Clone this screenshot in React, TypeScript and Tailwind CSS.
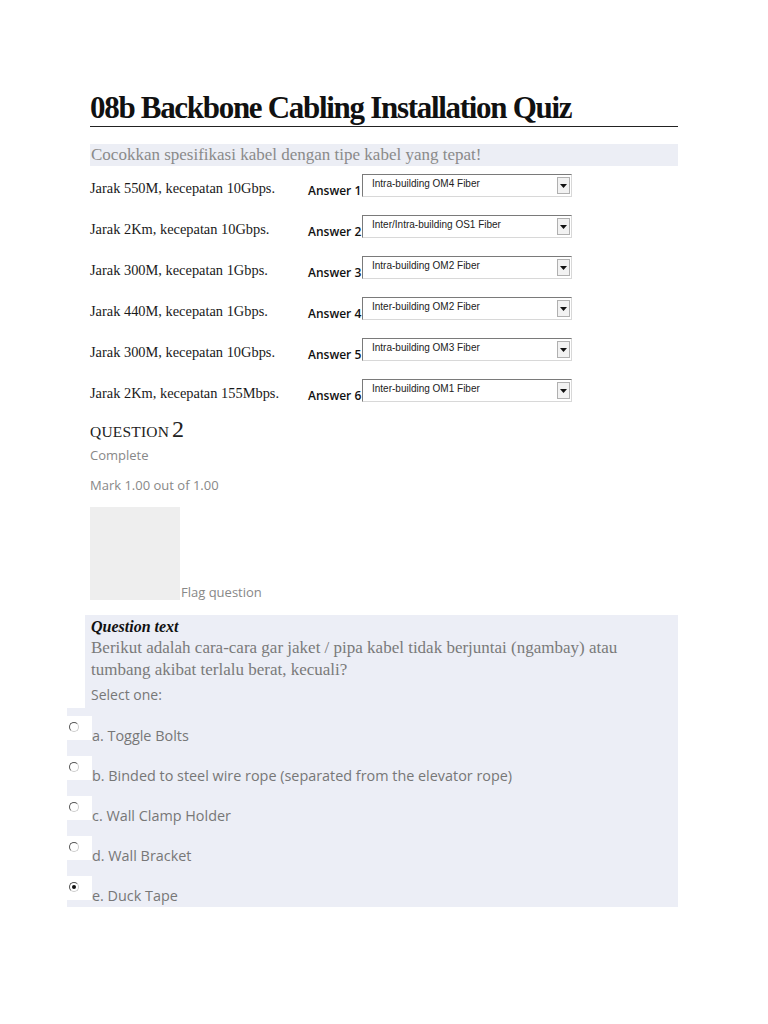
import React from "react";

const rows = [
  ["Jarak 550M, kecepatan 10Gbps.", "Answer 1", "Intra-building OM4 Fiber"],
  ["Jarak 2Km, kecepatan 10Gbps.", "Answer 2", "Inter/Intra-building OS1 Fiber"],
  ["Jarak 300M, kecepatan 1Gbps.", "Answer 3", "Intra-building OM2 Fiber"],
  ["Jarak 440M, kecepatan 1Gbps.", "Answer 4", "Inter-building OM2 Fiber"],
  ["Jarak 300M, kecepatan 10Gbps.", "Answer 5", "Intra-building OM3 Fiber"],
  ["Jarak 2Km, kecepatan 155Mbps.", "Answer 6", "Inter-building OM1 Fiber"],
];

const options = [
  "a. Toggle Bolts",
  "b. Binded to steel wire rope (separated from the elevator rope)",
  "c. Wall Clamp Holder",
  "d. Wall Bracket",
  "e. Duck Tape",
];

const serif = { fontFamily: '"Liberation Serif", "Times New Roman", serif' };
const sans = { fontFamily: '"Open Sans", "Noto Sans", sans-serif' };

function Select({ value }: { value: string }) {
  return (
    <div className="flex h-[23px] w-[210px] border border-t-[#7a7a7a] border-l-[#7a7a7a] border-r-[#d8d8d8] border-b-[#d8d8d8] bg-white">
      <div
        className="flex-1 pl-[9px] pt-[3px] text-[10px] leading-[12px] text-[#222]"
        style={{ fontFamily: '"Liberation Sans", Arial, sans-serif' }}
      >
        {value}
      </div>
      <div className="my-[2px] mr-[1px] flex w-[13px] items-center justify-center border border-[#b0b0b0] bg-[#f2f2f2]">
        <svg width="7" height="4" viewBox="0 0 7 4">
          <path d="M0 0 H7 L3.5 4 Z" fill="#111" />
        </svg>
      </div>
    </div>
  );
}

function Radio({ checked }: { checked?: boolean }) {
  return (
    <div className="flex h-[24px] w-[25px] items-start justify-start bg-white pl-[2px] pt-[6px]">
      <span className="flex h-[10px] w-[10px] items-center justify-center rounded-full border border-t-[#555] border-l-[#555] border-r-[#ccc] border-b-[#ccc] bg-white">
        {checked && <span className="h-[4px] w-[4px] rounded-full bg-[#111]" />}
      </span>
    </div>
  );
}

export default function App() {
  return (
    <div className="min-h-[1024px] w-[768px] bg-white">
      <div className="ml-[90px] w-[588px] pt-[92px]">
        <h1
          className="border-b border-[#222] pb-[2px] text-[31px] font-bold leading-[32px] tracking-[-1.3px] text-[#111]"
          style={serif}
        >
          08b Backbone Cabling Installation Quiz
        </h1>
        <div
          className="mt-[17px] h-[22px] bg-[#eceef5] pl-[1px] text-[17px] leading-[22px] text-[#8a8a8a]"
          style={serif}
        >
          Cocokkan spesifikasi kabel dengan tipe kabel yang tepat!
        </div>
        <div className="mt-[8px]">
          {rows.map(([q, a, v]) => (
            <div key={a} className="flex h-[41px] items-start">
              <div
                className="mt-[4px] w-[218px] text-[14.4px] leading-[20px] text-[#1a1a1a]"
                style={serif}
              >
                {q}
              </div>
              <div
                className="mt-[9px] w-[54px] text-[12px] font-semibold leading-[16px] text-[#111]"
                style={sans}
              >
                {a}
              </div>
              <Select value={v} />
            </div>
          ))}
        </div>
        <div className="mt-[-2px] flex items-baseline text-[#222]" style={serif}>
          <span className="text-[15.5px] leading-[22px] tracking-[0.2px]">QUESTION</span>
          <span className="ml-[3px] text-[24px] leading-[22px]">2</span>
        </div>
        <div className="mt-[3px] text-[13px] leading-[18px] text-[#888]" style={sans}>
          Complete
        </div>
        <div className="mt-[12px] text-[13px] leading-[18px] text-[#888]" style={sans}>
          Mark 1.00 out of 1.00
        </div>
        <div className="mt-[13px] flex items-end">
          <div className="h-[93px] w-[90px] bg-[#eeeeee]" />
          <span className="mb-[-1px] ml-[1px] text-[13px] leading-[18px] text-[#888]" style={sans}>
            Flag question
          </span>
        </div>
      </div>
      <div className="ml-[67px] mt-[15px] w-[611px]">
        <div className="ml-[18px] bg-[#eceef6] pl-[6px] pt-[2px] pb-[3px]">
          <div
            className="text-[16px] font-bold italic leading-[20px] text-[#111]"
            style={serif}
          >
            Question text
          </div>
          <div className="text-[17px] leading-[22px] text-[#7a7a7a]" style={serif}>
            Berikut adalah cara-cara gar jaket / pipa kabel tidak berjuntai (ngambay) atau
            <br />
            tumbang akibat terlalu berat, kecuali?
          </div>
          <div className="mt-[4px] text-[14px] leading-[20px] text-[#777]" style={sans}>
            Select one:
          </div>
        </div>
        <div className="flex flex-col gap-[9px] bg-[#eceef6] pt-[8px]">
          {options.map((o, i) => (
            <div key={o} className="flex h-[31px] items-start">
              <Radio checked={i === 4} />
              <span
                className="mt-[10px] text-[14.4px] leading-[20px] text-[#777]"
                style={sans}
              >
                {o}
              </span>
            </div>
          ))}
        </div>
      </div>
    </div>
  );
}
